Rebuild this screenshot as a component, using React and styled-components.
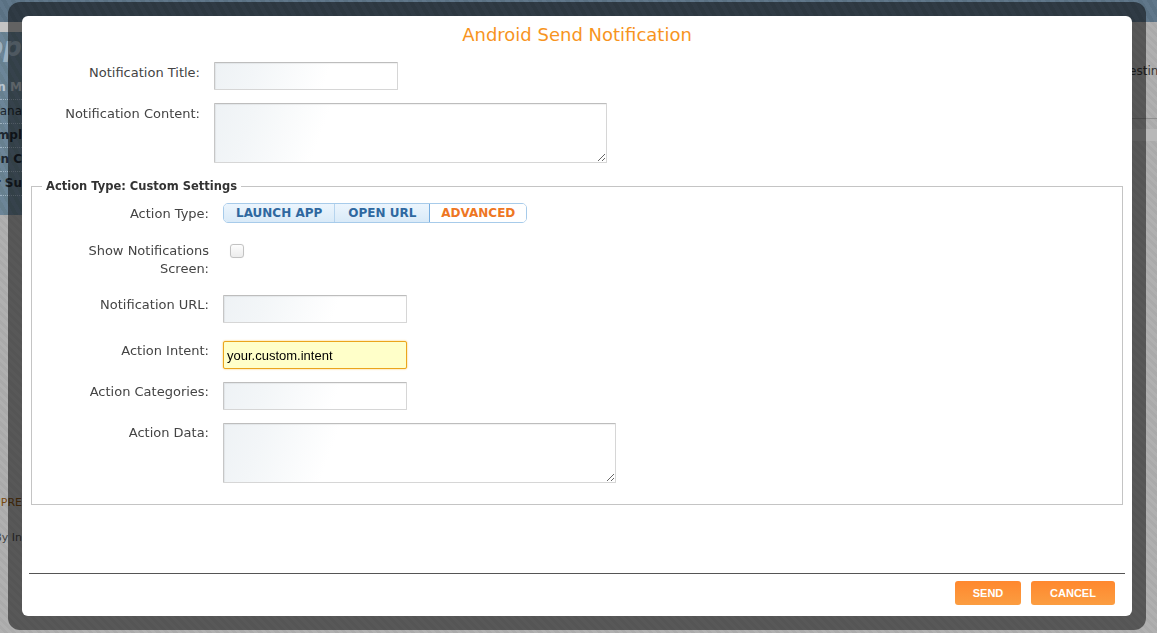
import React from 'react';
import styled, { createGlobalStyle } from 'styled-components';

const GlobalStyle = createGlobalStyle`
  html, body {
    margin: 0;
    padding: 0;
    height: 100%;
    overflow: hidden;
  }
  body {
    background: #adadad;
    font-family: "DejaVu Sans", Verdana, sans-serif;
  }
`;

/* ---------- page behind the modal ---------- */

const Page = styled.div`
  height: 633px;
  display: flex;
  flex-direction: column;
  background: repeating-linear-gradient(45deg, #b0b0b0 0 3px, #aaaaaa 3px 6px);
`;

const TopBar = styled.div`
  height: 22px;
  background: repeating-linear-gradient(60deg, #60778a 0 4px, #5a7183 4px 8px);
`;

const PageBody = styled.div`
  flex: 1;
  display: flex;
`;

const SideColumn = styled.div`
  width: 22px;
  overflow: hidden;
  display: flex;
  flex-direction: column;
`;

const SideMenu = styled.div`
  height: 193px;
  background: repeating-linear-gradient(60deg, #6c8598 0 4px, #67808f 4px 8px);
  display: flex;
  flex-direction: column;
  align-items: flex-end;
`;

const SideBand = styled.div`
  align-self: stretch;
  height: 10px;
  background: #c4c4c4;
`;

const SideLogo = styled.div`
  height: 44px;
  line-height: 44px;
  font: italic bold 26px "DejaVu Sans", sans-serif;
  color: #9cb1c1;
  white-space: nowrap;
`;

const SideItem = styled.div`
  height: 23px;
  line-height: 23px;
  border-bottom: 1px dotted #9fb3c2;
  align-self: stretch;
  text-align: right;
  white-space: nowrap;
  font-size: 12px;
  font-weight: ${p => (p.$bold ? 'bold' : 'normal')};
  color: ${p => p.$color || '#1d2730'};
  direction: rtl;
`;

const SideFoot = styled.div`
  margin-top: ${p => p.$mt}px;
  text-align: right;
  direction: rtl;
  white-space: nowrap;
  font-size: 11px;
  color: ${p => p.$color || '#444'};
`;

const MainArea = styled.div`
  flex: 1;
  display: flex;
  flex-direction: column;
  align-items: flex-end;
  overflow: hidden;
`;

const MainText = styled.div`
  margin-top: 42px;
  margin-right: -9px;
  font-size: 12px;
  color: #333;
  white-space: nowrap;
`;

const MainRule = styled.div`
  align-self: stretch;
  margin-top: 40px;
  height: 1px;
  background: #8e8e8e;
`;

const MainBand = styled.div`
  align-self: stretch;
  margin-top: 10px;
  height: 12px;
  background: #b8b8b8;
`;

/* ---------- modal ---------- */

const Frame = styled.div`
  position: fixed;
  left: 8px;
  top: 2px;
  width: 1138px;
  height: 628px;
  box-sizing: border-box;
  padding: 14px;
  border-radius: 12px;
  background: rgba(0, 0, 0, 0.5);
`;

const Dialog = styled.div`
  height: 100%;
  background: #fff;
  border-radius: 6px;
  display: flex;
  flex-direction: column;
`;

const Title = styled.h2`
  margin: 0;
  padding-top: 8px;
  height: 22px;
  line-height: 22px;
  text-align: center;
  font-size: 18px;
  font-weight: normal;
  color: #f7941e;
`;

const Row = styled.div`
  display: flex;
  align-items: flex-start;
  gap: 14px;
  margin-top: ${p => p.$mt || 0}px;
`;

const Label = styled.label`
  flex-shrink: 0;
  width: ${p => p.$w}px;
  padding-top: ${p => p.$pt ?? 1}px;
  text-align: right;
  font-size: 13px;
  line-height: 18px;
  color: #444;
`;

const fieldBase = `
  box-sizing: border-box;
  border: 1px solid #d6d6d6;
  border-top-color: #bdbdbd;
  border-left-color: #c6c6c6;
  border-radius: 1px;
  box-shadow: inset 1px 1px 1px rgba(0, 0, 0, 0.06);
  background: linear-gradient(110deg, #eef2f5 0, #f3f6f8 40px, #ffffff 110px);
  font: 13px "Liberation Sans", Arial, sans-serif;
  color: #000;
  outline: none;
`;

const TextInput = styled.input`
  ${fieldBase}
  width: 184px;
  height: 28px;
  padding: 0 3px;
`;

const FocusInput = styled.input`
  ${fieldBase}
  width: 184px;
  height: 28px;
  padding: 0 3px;
  background: #ffffc9;
  border: 1px solid #eba51c;
  border-radius: 2px;
  box-shadow: 0 0 2px #f7c04e;
`;

const TextArea = styled.textarea`
  ${fieldBase}
  width: 393px;
  height: 60px;
  padding: 3px;
  resize: both;
`;

const Fieldset = styled.fieldset`
  margin: 16px 9px 0;
  padding: 10px 0 21px;
  border: 1px solid #c4c4c4;
  min-width: 0;
`;

const Legend = styled.legend`
  margin-left: 10px;
  padding: 0 4px;
  font-size: 11.5px;
  line-height: 14px;
  font-weight: bold;
  color: #333;
`;

const Segments = styled.div`
  display: inline-flex;
  height: 20px;
  box-sizing: border-box;
  border: 1px solid #a7cbea;
  border-radius: 5px;
  overflow: hidden;
`;

const Segment = styled.button`
  height: 18px;
  margin: 0;
  padding: 0 ${p => p.$pad}px;
  border: none;
  border-left: 1px solid ${p => (p.$active ? '#78aee0' : '#b6d4ee')};
  &:first-child { border-left: none; }
  background: ${p => (p.$active ? '#fff' : 'linear-gradient(#ecf5fd, #d9eaf8)')};
  color: ${p => (p.$active ? '#ee7623' : '#2f68a0')};
  font-family: inherit;
  font-size: 12px;
  font-weight: bold;
  line-height: 18px;
  cursor: pointer;
`;

const Check = styled.input.attrs({ type: 'checkbox' })`
  appearance: none;
  margin: 3px 0 0 7px;
  width: 14px;
  height: 14px;
  box-sizing: border-box;
  border: 1px solid #c2c2c2;
  border-radius: 3px;
  background: linear-gradient(#fdfdfd, #ececec);
  box-shadow: 0 0 1px rgba(0, 0, 0, 0.1);
`;

const Spacer = styled.div`
  flex: 1;
`;

const Footer = styled.div`
  margin: 0 7px;
  padding: 7px 10px 11px 0;
  border-top: 1px solid #555;
  display: flex;
  justify-content: flex-end;
  gap: 10px;
`;

const ActionButton = styled.button`
  width: ${p => p.$w}px;
  height: 24px;
  border: none;
  border-radius: 3px;
  background: linear-gradient(#ff882e, #fb9d41);
  color: #fff;
  font: bold 11px "Liberation Sans", Arial, sans-serif;
  cursor: pointer;
`;

const OUTER = 178;
const INNER = 177;

export default function App() {
  return (
    <>
      <GlobalStyle />
      <Page>
        <TopBar />
        <PageBody>
          <SideColumn>
            <SideMenu>
              <SideBand />
              <SideLogo>App</SideLogo>
              <SideItem $bold $color="#b9c6d0">Application M</SideItem>
              <SideItem>Device Mana</SideItem>
              <SideItem $bold>Templ</SideItem>
              <SideItem $bold>Location C</SideItem>
              <SideItem $bold>Our Su</SideItem>
            </SideMenu>
            <SideFoot $mt={281} $color="#7a4a10">PRE</SideFoot>
            <SideFoot $mt={22}>By In</SideFoot>
          </SideColumn>
          <MainArea>
            <MainText>Testing</MainText>
            <MainRule />
            <MainBand />
          </MainArea>
        </PageBody>
      </Page>

      <Frame>
        <Dialog>
          <Title>Android Send Notification</Title>

          <Row $mt={16}>
            <Label $w={OUTER} $pt={2}>Notification Title:</Label>
            <TextInput />
          </Row>
          <Row $mt={13}>
            <Label $w={OUTER} $pt={2}>Notification Content:</Label>
            <TextArea />
          </Row>

          <Fieldset>
            <Legend>Action Type: Custom Settings</Legend>
            <Row>
              <Label $w={INNER} $pt={2}>Action Type:</Label>
              <Segments>
                <Segment $pad={12}>LAUNCH APP</Segment>
                <Segment $pad={13}>OPEN URL</Segment>
                <Segment $pad={11} $active>ADVANCED</Segment>
              </Segments>
            </Row>
            <Row $mt={18}>
              <Label $w={INNER}>
                Show Notifications
                <br />
                Screen:
              </Label>
              <Check />
            </Row>
            <Row $mt={17}>
              <Label $w={INNER}>Notification URL:</Label>
              <TextInput />
            </Row>
            <Row $mt={18}>
              <Label $w={INNER}>Action Intent:</Label>
              <FocusInput defaultValue="your.custom.intent" />
            </Row>
            <Row $mt={13}>
              <Label $w={INNER}>Action Categories:</Label>
              <TextInput />
            </Row>
            <Row $mt={13}>
              <Label $w={INNER}>Action Data:</Label>
              <TextArea />
            </Row>
          </Fieldset>

          <Spacer />
          <Footer>
            <ActionButton $w={66}>SEND</ActionButton>
            <ActionButton $w={84}>CANCEL</ActionButton>
          </Footer>
        </Dialog>
      </Frame>
    </>
  );
}
